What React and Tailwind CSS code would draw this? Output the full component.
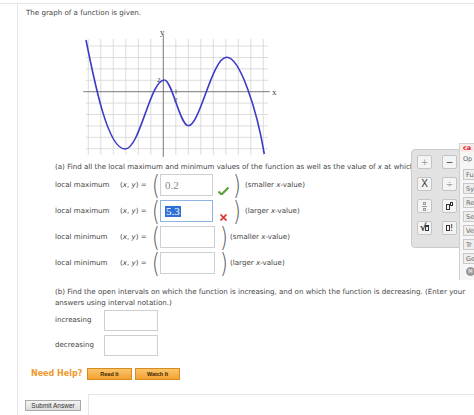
import React from "react";

const font = "font-['DejaVu_Sans',Verdana,sans-serif]";

function Graph() {
  const vx = [];
  for (let k = -6; k <= 8; k++) vx.push(163.3 + k * 12.5);
  const hy = [];
  for (let k = -4; k <= 5; k++) hy.push(91.7 + k * 11.4);
  return (
    <svg width="205" height="135" viewBox="80 25 205 135" className="ml-[54px] mt-[7px] block">
      {vx.map((x) => (
        <line key={"v" + x} x1={x} y1="39" x2={x} y2="155" stroke="#d4d4d4" strokeWidth="0.8" />
      ))}
      {hy.map((y) => (
        <line key={"h" + y} x1="86" y1={y} x2="268" y2={y} stroke="#d4d4d4" strokeWidth="0.8" />
      ))}
      <line x1="83" y1="91.7" x2="270" y2="91.7" stroke="#666" strokeWidth="0.8" />
      <line x1="163.3" y1="34" x2="163.3" y2="157" stroke="#666" strokeWidth="0.8" />
      <line x1="176" y1="89.5" x2="176" y2="94" stroke="#666" strokeWidth="0.8" />
      <text x="160" y="35" fontSize="9" fontFamily="Liberation Serif" fill="#444">y</text>
      <text x="272" y="95" fontSize="9" fontFamily="Liberation Serif" fill="#444">x</text>
      <text x="157" y="82" fontSize="7" fontFamily="Liberation Serif" fill="#444">2</text>
      <text x="174" y="102" fontSize="7" fontFamily="Liberation Serif" fill="#444">2</text>
      <path
        d="M86,40 C95,85 108,149 125,149 C140,149 150,80 164.3,80 C172,80 180,125.7 188.3,125.7 C200,125.7 212,57.3 226.7,57.3 C240,57.3 257,110 264.3,154"
        fill="none"
        stroke="#3b3bc8"
        strokeWidth="1.6"
      />
    </svg>
  );
}

function Check() {
  return (
    <svg width="11" height="8" viewBox="0 0 11 8">
      <path d="M0.5,4.5 L3.5,7.5 L10.5,0.5" fill="none" stroke="#5da03c" strokeWidth="2.2" />
    </svg>
  );
}

function Cross() {
  return (
    <svg width="7" height="7" viewBox="0 0 7 7">
      <path d="M0.5,0.5 L6.5,6.5 M6.5,0.5 L0.5,6.5" stroke="#e0393b" strokeWidth="1.8" />
    </svg>
  );
}

function Paren({ side, className = "" }) {
  return (
    <span className={"font-['DejaVu_Sans'] text-[20px] leading-[18px] font-extralight text-[#555] scale-y-[1.35] inline-block " + className}>
      {side}
    </span>
  );
}

function Row({ label, note, value, state }) {
  const filled = state === "ok" || state === "bad";
  return (
    <div className="flex h-[26px] items-center">
      <span className="w-[65px] shrink-0">{label}</span>
      <span className="w-[32px] shrink-0">
        (<i>x</i>, <i>y</i>) =
      </span>
      <Paren side="(" className="w-[8px]" />
      {filled ? (
        <div
          className={
            "w-[53px] h-[22px] shrink-0 flex items-center px-[4px] border bg-white " +
            (state === "bad" ? "border-[#8fb3e0]" : "border-[#cfcfcf]")
          }
        >
          {state === "bad" ? (
            <span className="font-['Liberation_Serif'] text-[11px] leading-[11px] bg-[#2f6fd6] text-white px-[1px]">{value}</span>
          ) : (
            <span className="font-['Liberation_Serif'] text-[11px] text-[#888]">{value}</span>
          )}
        </div>
      ) : (
        <div className="w-[55px] h-[22px] shrink-0 border border-[#cfcfcf] bg-white" />
      )}
      {filled && (
        <div className="w-[20px] h-full shrink-0 flex items-end justify-center pb-[3px]">
          {state === "ok" ? <Check /> : <Cross />}
        </div>
      )}
      <Paren side=")" className={filled ? "w-[12px]" : "w-[10px] ml-[5px]"} />
      <span className="whitespace-nowrap">
        ({note} <i>x</i>-value)
      </span>
    </div>
  );
}

function CalcBtn({ children, dark }) {
  return (
    <div
      className={
        "w-[15px] h-[14px] border border-[#c4c4c4] rounded-[2px] bg-[#f4f4f4] flex items-center justify-center text-[9px] leading-none " +
        (dark ? "text-[#333]" : "text-[#9a9a9a]")
      }
    >
      {children}
    </div>
  );
}

function Box({ className = "" }) {
  return <span className={"inline-block border border-current " + className} />;
}

function Calculator() {
  const tabs = ["Fu", "Sy", "Re", "Se", "Ve", "Tr", "Ge"];
  return (
    <div className="absolute left-[411px] top-[143px] flex">
      <div className="mt-[6px] w-[50px] h-[99px] bg-[#e2e2e2] border border-[#cacaca] rounded-l-[4px] grid grid-cols-2 content-start gap-y-[8px] pl-[5px] pt-[5px] gap-x-[7px]">
        <CalcBtn>+</CalcBtn>
        <CalcBtn dark>−</CalcBtn>
        <CalcBtn dark>
          <span className="font-['Liberation_Sans'] text-[10px]">X</span>
        </CalcBtn>
        <CalcBtn>÷</CalcBtn>
        <CalcBtn>
          <span className="flex flex-col items-center gap-[1px]">
            <Box className="w-[3px] h-[3px]" />
            <span className="w-[5px] h-px bg-current" />
            <Box className="w-[3px] h-[3px]" />
          </span>
        </CalcBtn>
        <CalcBtn dark>
          <span className="flex items-start">
            <Box className="w-[4px] h-[6px] mt-[2px]" />
            <Box className="w-[3px] h-[4px]" />
          </span>
        </CalcBtn>
        <CalcBtn dark>
          <span className="flex items-center font-bold text-[10px]">
            √<Box className="w-[4px] h-[6px] -ml-[1px] border-t-2" />
          </span>
        </CalcBtn>
        <CalcBtn dark>
          <span className="flex items-center text-[9px]">
            <Box className="w-[4px] h-[6px]" />!
          </span>
        </CalcBtn>
      </div>
      <div className="w-[20px] h-[137px] bg-[#f6f6f6] border-l border-t border-[#cfcfcf] -ml-[2px] flex flex-col text-[6.5px] text-[#666]">
        <div className="h-[8px] pl-[3px] leading-[8px] font-bold text-[#d22] bg-[#fbeaea]">ca</div>
        <div className="h-[14px] pl-[3px] leading-[14px]">Op</div>
        <div className="mt-[3px] flex flex-col gap-[3px] pl-[3px]">
          {tabs.map((t) => (
            <div key={t} className="h-[11px] border border-r-0 border-[#c8c8c8] bg-[#eee] pl-[2px] leading-[10px]">
              {t}
            </div>
          ))}
        </div>
        <div className="mt-[3px] ml-[6px] w-[9px] h-[9px] rounded-full bg-[#999] text-white text-[5px] leading-[9px] text-center">
          M
        </div>
      </div>
    </div>
  );
}

function HelpBtn({ children }) {
  return (
    <div className="w-[45px] h-[12px] border border-[#d88c1e] bg-gradient-to-b from-[#fbc56a] to-[#f3a12d] flex items-center justify-center text-[5.5px] font-bold text-[#3a2600] font-['Liberation_Sans']">
      {children}
    </div>
  );
}

export default function App() {
  return (
    <div className={"relative w-[474px] h-[415px] overflow-hidden bg-white text-[#444] text-[7.1px] " + font}>
      <div className="mt-[3px] h-[412px] border-t border-[#e6e6e6]">
        <div className="ml-[17px] h-full border-l border-[#e6e6e6] pl-[8px] pt-[4px] flex flex-col">
          <p className="leading-[10px]">The graph of a function is given.</p>
          <Graph />
          <div className="ml-[29px] mt-[2px]">
            <p className="leading-[10px] whitespace-nowrap">
              (a) Find all the local maximum and minimum values of the function as well as the value of <i>x</i> at which each occurs.
            </p>
            <Row label="local maximum" note="smaller" value="0.2" state="ok" />
            <Row label="local maximum" note="larger" value="5.3" state="bad" />
            <Row label="local minimum" note="smaller" />
            <Row label="local minimum" note="larger" />
            <p className="leading-[11px] mt-[10px] whitespace-nowrap">
              (b) Find the open intervals on which the function is increasing, and on which the function is decreasing. (Enter your
              <br />
              answers using interval notation.)
            </p>
            <div className="flex items-center h-[21px] mt-[2px]">
              <span className="w-[49px]">increasing</span>
              <div className="w-[54px] h-[21px] border border-[#cfcfcf]" />
            </div>
            <div className="flex items-center h-[21px] mt-[4px]">
              <span className="w-[49px]">decreasing</span>
              <div className="w-[54px] h-[21px] border border-[#cfcfcf]" />
            </div>
          </div>
          <div className="ml-[5px] mt-[12px] flex items-center h-[12px] gap-[3px]">
            <span className="text-[8px] font-bold text-[#f2982c] w-[53px]">Need Help?</span>
            <HelpBtn>Read It</HelpBtn>
            <HelpBtn>Watch It</HelpBtn>
          </div>
          <div className="mt-[14px] flex flex-1">
            <div className="-ml-[1px] mt-[6px] w-[56px] h-[11px] border border-[#aaa] bg-gradient-to-b from-[#f4f4f4] to-[#dcdcdc] flex items-center justify-center text-[6.5px] text-[#333] font-['Liberation_Sans']">
              Submit Answer
            </div>
            <div className="ml-[7px] flex-1 border-t border-l border-[#e6e6e6]" />
          </div>
        </div>
      </div>
      <Calculator />
    </div>
  );
}
